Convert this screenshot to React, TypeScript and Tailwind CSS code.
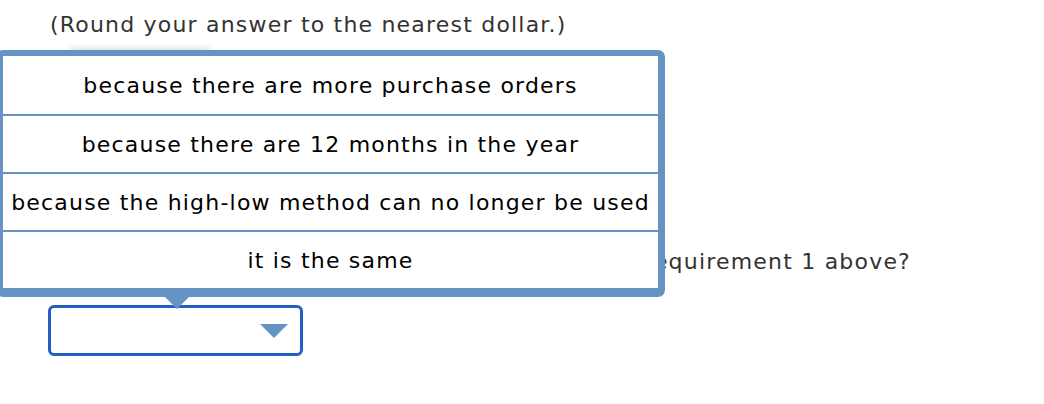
import * as React from "react";

const options = [
  "because there are more purchase orders",
  "because there are 12 months in the year",
  "because the high-low method can no longer be used",
  "it is the same",
];

export default function App() {
  return (
    <div className="relative h-[404px] w-[1044px] overflow-hidden bg-white font-['DejaVu_Sans',Verdana,sans-serif] text-[22px] tracking-[1.2px]">
      <p className="pl-[50px] pt-[10px] leading-[30px] text-[#333333]">
        (Round your answer to the nearest dollar.)
      </p>

      <p className="mt-[207px] w-[911px] text-right leading-[30px] text-[#333333]">
        How does the estimate differ from requirement 1 above?
      </p>

      <div className="ml-[48px] mt-[28px] flex h-[51px] w-[255px] items-center justify-end rounded-md border-[3px] border-[#2360c2] bg-white pr-[12px]">
        <svg width="28" height="14" viewBox="0 0 28 14">
          <path d="M0 0 L28 0 L14 14 Z" fill="#6593c4" />
        </svg>
      </div>

      {/* faint shadow of the control behind the menu */}
      <div className="absolute left-[70px] top-[47px] h-[6px] w-[140px] rounded-full bg-black/10 blur-[2px]" />

      {/* open dropdown menu */}
      <div className="absolute left-[-4px] top-[50px] w-[669px]">
        <div className="rounded-[7px] border-x-[7px] border-t-[6px] border-b-[9px] border-[#6593c4] bg-white">
          {options.map((o, i) => (
            <div
              key={o}
              className={
                i === 0
                  ? "flex h-[58px] items-center justify-center text-black"
                  : "flex h-[58px] items-center justify-center border-t-2 border-[#6593c4] text-black"
              }
            >
              {o}
            </div>
          ))}
        </div>
        <svg
          className="ml-[169px]"
          width="24"
          height="12"
          viewBox="0 0 24 12"
        >
          <path d="M0 0 L24 0 L12 12 Z" fill="#6593c4" />
        </svg>
      </div>
    </div>
  );
}
